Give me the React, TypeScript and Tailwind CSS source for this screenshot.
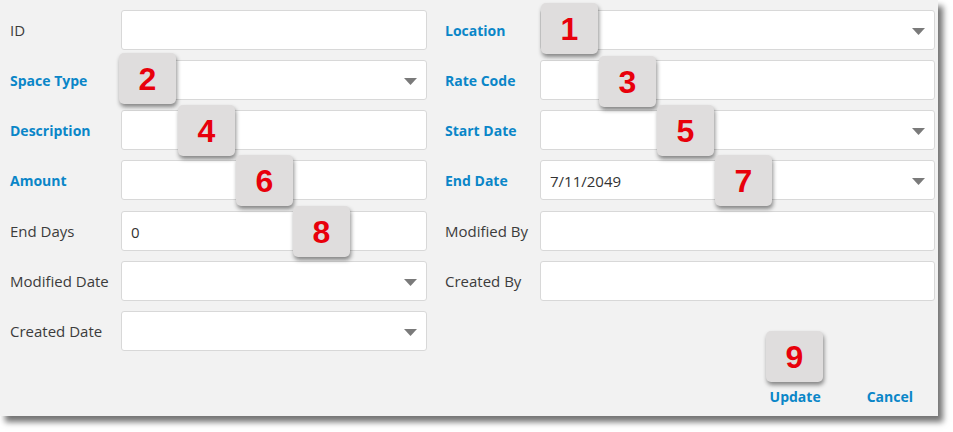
import React from 'react';

type Field = {
  label: string;
  required?: boolean;
  value?: string;
  dropdown?: boolean;
};

const leftFields: Field[] = [
  { label: 'ID' },
  { label: 'Space Type', required: true, dropdown: true },
  { label: 'Description', required: true },
  { label: 'Amount', required: true },
  { label: 'End Days', value: '0' },
  { label: 'Modified Date', dropdown: true },
  { label: 'Created Date', dropdown: true },
];

const rightFields: Field[] = [
  { label: 'Location', required: true, dropdown: true },
  { label: 'Rate Code', required: true },
  { label: 'Start Date', required: true, dropdown: true },
  { label: 'End Date', required: true, value: '7/11/2049', dropdown: true },
  { label: 'Modified By' },
  { label: 'Created By' },
];

// callout badges over the form
const badges = [
  { n: 1, x: 541, y: 3 },
  { n: 2, x: 119, y: 53 },
  { n: 3, x: 599, y: 56 },
  { n: 4, x: 178, y: 105 },
  { n: 5, x: 657, y: 105 },
  { n: 6, x: 236, y: 155 },
  { n: 7, x: 715, y: 155 },
  { n: 8, x: 293, y: 206 },
  { n: 9, x: 766, y: 331 },
];

const Caret = () => (
  <svg width="13" height="7" viewBox="0 0 13 7" className="absolute right-[9px] top-[17px]">
    <path d="M0 0 H13 L6.5 7 Z" fill="#7a7a7a" />
  </svg>
);

const Row = ({ field, labelWidth, inputWidth }: { field: Field; labelWidth: string; inputWidth: string }) => (
  <div className="flex items-center h-[40px]">
    <div
      className={`${labelWidth} pt-[1px] ${
        field.required ? 'font-bold text-[#0a86c8] text-[14px]' : 'text-[#3c3c3c] text-[15px]'
      }`}
    >
      {field.label}
    </div>
    <div
      className={`${inputWidth} relative h-[40px] bg-white border border-[#d8d8d8] rounded-[3px] flex items-center pl-[9px] pt-[2px] text-[15px] text-[#333]`}
    >
      {field.value}
      {field.dropdown && <Caret />}
    </div>
  </div>
);

const App = () => {
  return (
    <div className="w-[953px] h-[432px] bg-white" style={{ fontFamily: '"Open Sans", "Noto Sans", sans-serif' }}>
      <div className="relative w-[938px] h-[416px] bg-[#f2f2f2] shadow-[5px_6px_6px_rgba(0,0,0,0.55)] pt-[10px] pl-[10px]">
        <div className="flex">
          <div className="flex flex-col gap-[10px]">
            {leftFields.map((f, i) => (
              <div key={f.label} className={i === 4 ? 'mt-[1px]' : ''}>
                <Row field={f} labelWidth="w-[111px]" inputWidth="w-[306px]" />
              </div>
            ))}
          </div>
          <div className="flex flex-col gap-[10px] ml-[18px]">
            {rightFields.map((f, i) => (
              <div key={f.label} className={i === 4 ? 'mt-[1px]' : ''}>
                <Row field={f} labelWidth="w-[95px]" inputWidth="w-[395px]" />
              </div>
            ))}
          </div>
        </div>

        <div className="absolute right-[25px] bottom-[9px] flex gap-[46px] text-[14px] font-bold text-[#0a86c8]">
          <span>Update</span>
          <span>Cancel</span>
        </div>

        {badges.map((b) => (
          <div
            key={b.n}
            className="absolute w-[57px] h-[51px] rounded-[5px] bg-[#dfdddd] shadow-[1px_3px_4px_rgba(0,0,0,0.45)] flex items-center justify-center text-[32px] font-bold text-[#e8000b]"
            style={{ left: b.x, top: b.y, fontFamily: '"Liberation Sans", Arial, sans-serif' }}
          >
            {b.n}
          </div>
        ))}
      </div>
    </div>
  );
};

export default App;
